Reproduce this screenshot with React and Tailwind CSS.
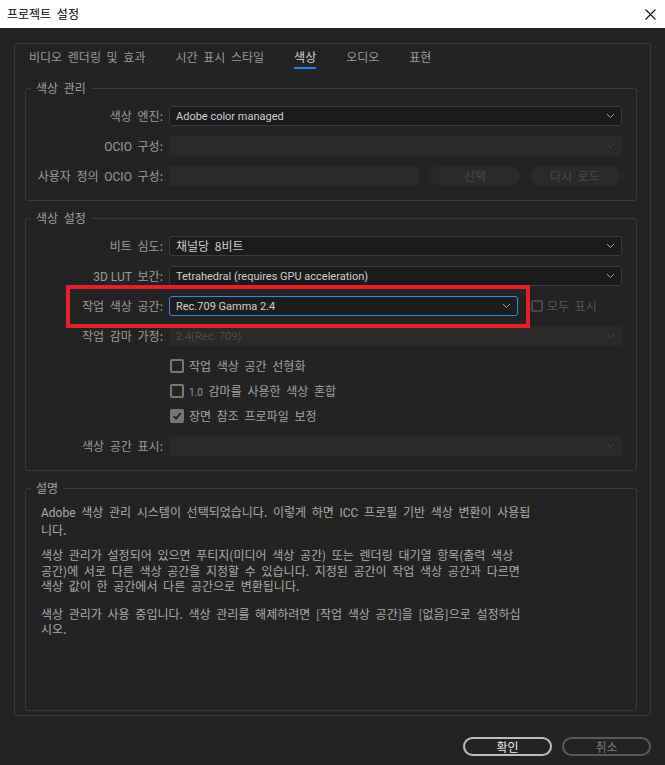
import React from 'react';

const kr = "font-['Noto_Sans_CJK_KR',sans-serif] [word-spacing:3px]";
const latin = "font-['Roboto','Noto_Sans_CJK_KR',sans-serif] [word-spacing:normal]";

const Chevron = ({ color = '#9a9a9a' }) => (
  <svg width="9" height="6" viewBox="0 0 9 6" fill="none">
    <path d="M1 1 L4.5 4.5 L8 1" stroke={color} strokeWidth="1" />
  </svg>
);

const Select = ({ value, variant = 'normal', className = '', textClass = latin }) => {
  const box =
    variant === 'disabled'
      ? 'bg-[#2a2a2a] border-transparent'
      : variant === 'active'
        ? 'bg-[#1d1d1d] border-[#2d8ceb]'
        : 'bg-[#1b1b1b] border-[#3b3b3b]';
  return (
    <div className={`h-[20px] flex items-center justify-between border rounded-[3px] pl-[6px] pr-[6px] ${box} ${className}`}>
      <span className={`${textClass} text-[11px] leading-none ${variant === 'disabled' ? 'text-[#4d4d4d]' : 'text-[#cfcfcf]'}`}>
        {value}
      </span>
      <Chevron color={variant === 'disabled' ? '#444444' : '#a0a0a0'} />
    </div>
  );
};

const Row = ({ label, children, className = '' }) => (
  <div className={`flex items-center h-[20px] ${className}`}>
    <div className="w-[137px] shrink-0 text-right text-[12px] text-[#9c9c9c] whitespace-nowrap">{label}</div>
    <div className="ml-[6px] flex-1 flex items-center">{children}</div>
  </div>
);

const Checkbox = ({ checked, children }) => (
  <div className="flex items-center h-[16px] ml-[144px]">
    {checked ? (
      <div className="w-[14px] h-[14px] rounded-[2px] bg-[#777777] flex items-center justify-center">
        <svg width="10" height="10" viewBox="0 0 10 10" fill="none">
          <path d="M1.5 5.2 L4 7.6 L8.6 2.2" stroke="#1f1f1f" strokeWidth="1.8" />
        </svg>
      </div>
    ) : (
      <div className="w-[14px] h-[14px] rounded-[2px] border-2 border-[#777777]" />
    )}
    <span className="ml-[5px] text-[12px] text-[#a4a4a4] whitespace-nowrap">{children}</span>
  </div>
);

const Group = ({ title, className = '', children }) => (
  <fieldset className={`border border-[#3a3a3a] rounded-[3px] ml-[10px] mr-[13px] ${className}`}>
    <legend className="ml-[5px] px-[5px] text-[12px] leading-[16px] text-[#a0a0a0]">{title}</legend>
    {children}
  </fieldset>
);

const tabs = ['비디오 렌더링 및 효과', '시간 표시 스타일', '색상', '오디오', '표현'];

export default function App() {
  return (
    <div className={`w-full h-screen bg-[#232323] flex flex-col ${kr}`}>
      {/* title bar */}
      <div className="h-[28px] bg-white flex items-center justify-between pl-[7px] pr-[9px] shrink-0">
        <span className="text-[12px] text-black">프로젝트 설정</span>
        <svg width="11" height="11" viewBox="0 0 11 11" fill="none">
          <path d="M0.5 0.5 L10.5 10.5 M10.5 0.5 L0.5 10.5" stroke="#111" strokeWidth="1.1" />
        </svg>
      </div>

      <div className="px-[14px] pt-[15px]">
        <div className="h-[673px] border border-[#3a3a3a] rounded-[3px] flex flex-col">
          {/* tabs */}
          <div className="flex gap-[30px] pl-[14px] pt-[5px]">
            {tabs.map((t) => (
              <div key={t} className="flex flex-col">
                <span className={`text-[12px] leading-[16px] whitespace-nowrap ${t === '색상' ? 'text-[#d6d6d6]' : 'text-[#9a9a9a]'}`}>{t}</span>
                <div className={`mt-[2px] h-[2px] ${t === '색상' ? 'bg-[#2680eb]' : 'bg-transparent'}`} />
              </div>
            ))}
          </div>

          <Group title="색상 관리" className="mt-[11px] pt-[10px] pb-[14px] pr-[14px]">
            <Row label="색상 엔진:">
              <Select value="Adobe color managed" className="flex-1" />
            </Row>
            <Row label={<span><span className={latin}>OCIO</span> 구성:</span>} className="mt-[10px]">
              <Select value="" variant="disabled" className="flex-1" />
            </Row>
            <Row label={<span>사용자 정의 <span className={latin}>OCIO</span> 구성:</span>} className="mt-[10px]">
              <div className="w-[250px] h-[20px] bg-[#2a2a2a] rounded-[3px]" />
              <div className="ml-[11px] w-[90px] h-[20px] rounded-full bg-[#2a2a2a] flex items-center justify-center text-[12px] text-[#4a4a4a]">선택</div>
              <div className="ml-[10px] w-[90px] h-[20px] rounded-full bg-[#2a2a2a] flex items-center justify-center text-[12px] text-[#4a4a4a]">다시 로드</div>
            </Row>
          </Group>

          <Group title="색상 설정" className="mt-[9px] pt-[10px] pb-[14px] pr-[14px]">
            <Row label="비트 심도:">
              <Select value="채널당 8비트" className="flex-1" textClass={`${kr} !text-[12px]`} />
            </Row>
            <Row label={<span><span className={latin}>3D LUT</span> 보간:</span>} className="mt-[10px]">
              <Select value="Tetrahedral (requires GPU acceleration)" className="flex-1" />
            </Row>
            <div className="relative mt-[10px]">
              <Row label="작업 색상 공간:">
                <Select value="Rec.709 Gamma 2.4" variant="active" className="w-[349px]" />
                <div className="ml-[13px] w-[12px] h-[12px] rounded-[2px] border-2 border-[#474747]" />
                <span className="ml-[4px] text-[12px] text-[#555555] whitespace-nowrap">모두 표시</span>
              </Row>
              <div className="absolute left-[40px] top-[-11px] w-[464px] h-[43px] border-4 border-[#e3202b]" />
            </div>
            <Row label="작업 감마 가정:" className="mt-[10px]">
              <Select value="2.4(Rec. 709)" variant="disabled" className="flex-1" />
            </Row>
            <div className="mt-[12px] flex flex-col gap-[9px]">
              <Checkbox>작업 색상 공간 선형화</Checkbox>
              <Checkbox><span className={`${latin} text-[10px] text-[#8f9ab0]`}>1.0</span> 감마를 사용한 색상 혼합</Checkbox>
              <Checkbox checked>장면 참조 프로파일 보정</Checkbox>
            </div>
            <Row label="색상 공간 표시:" className="mt-[12px]">
              <Select value="" variant="disabled" className="flex-1" />
            </Row>
          </Group>

          <Group title="설명" className="mt-[9px] mb-[4px] flex-1 pt-[8px]">
            <div className="pl-[15px] text-[12px] leading-[15.5px] text-[#ababab] whitespace-nowrap">
              <p><span className={latin}>Adobe</span> 색상 관리 시스템이 선택되었습니다. 이렇게 하면 <span className={latin}>ICC</span> 프로필 기반 색상 변환이 사용됩</p>
              <p>니다.</p>
              <p className="mt-[10px]">색상 관리가 설정되어 있으면 푸티지(미디어 색상 공간) 또는 렌더링 대기열 항목(출력 색상</p>
              <p>공간)에 서로 다른 색상 공간을 지정할 수 있습니다. 지정된 공간이 작업 색상 공간과 다르면</p>
              <p>색상 값이 한 공간에서 다른 공간으로 변환됩니다.</p>
              <p className="mt-[12px]">색상 관리가 사용 중입니다. 색상 관리를 해제하려면 [작업 색상 공간]을 [없음]으로 설정하십</p>
              <p>시오.</p>
            </div>
          </Group>
        </div>

        {/* dialog buttons */}
        <div className="flex justify-end gap-[10px] mt-[21px]">
          <div className="w-[89px] h-[19px] rounded-full border-2 border-[#bdbdbd] flex items-center justify-center text-[12px] text-[#eeeeee]">확인</div>
          <div className="w-[89px] h-[19px] rounded-full border-2 border-[#5a5a5a] flex items-center justify-center text-[12px] text-[#7a7a7a]">취소</div>
        </div>
      </div>
    </div>
  );
}
